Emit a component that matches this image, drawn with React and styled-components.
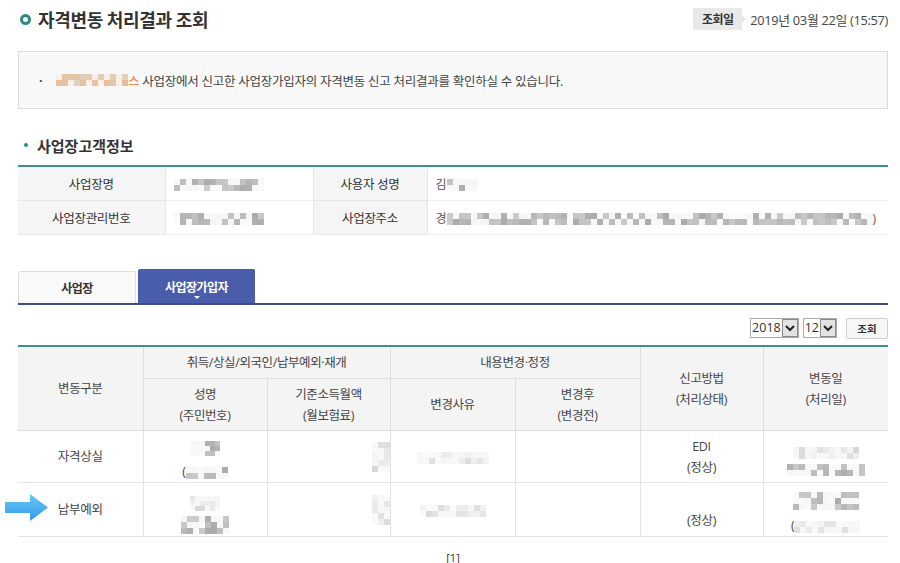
import React from "react";
import styled, { createGlobalStyle } from "styled-components";

const GlobalStyle = createGlobalStyle`
    body {
        margin: 0;
        background: #fff;
        font-family: "Open Sans", "Noto Sans CJK KR", sans-serif;
        color: #444;
    }
`;

const rand = (seed, i) => {
    const x = Math.sin(seed * 97.13 + i * 12.9898) * 43758.5453;
    return x - Math.floor(x);
};

const Mosaic = ({ w, h, cell = 6, seed = 1, warm, light }) => {
    const cols = Math.ceil(w / cell);
    const rows = Math.ceil(h / cell);
    const cells = [];
    for (let i = 0; i < cols * rows; i++) {
        const r = rand(seed, i);
        let bg;
        if (warm) {
            bg = r > 0.7 ? "#f7efe8" : `rgb(${235 - r * 20}, ${185 + r * 40}, ${150 + r * 60})`;
        } else {
            const base = light ? 215 : 170;
            const v = r > 0.55 ? 240 + Math.round(r * 10) : base + Math.round(r * 60);
            bg = `rgb(${v}, ${v}, ${v})`;
        }
        cells.push(<MosaicCell key={i} style={{ background: bg }} />);
    }
    return (
        <MosaicGrid $cols={cols} $cell={cell}>
            {cells}
        </MosaicGrid>
    );
};

const MosaicGrid = styled.span`
    display: inline-grid;
    grid-template-columns: repeat(${(p) => p.$cols}, ${(p) => p.$cell}px);
    grid-auto-rows: ${(p) => p.$cell}px;
    vertical-align: middle;
`;

const MosaicCell = styled.span`
    display: block;
`;

const Chevron = () => (
    <svg width="10" height="8" viewBox="0 0 10 8">
        <path d="M1 2 L5 6 L9 2" fill="none" stroke="#222" strokeWidth="2" />
    </svg>
);

const App = () => {
    return (
        <>
            <GlobalStyle />
            <Page>
                <Header>
                    <Title>
                        <Ring />
                        자격변동 처리결과 조회
                    </Title>
                    <DateWrap>
                        <Badge>조회일</Badge>
                        <DateText>2019년 03월 22일 (15:57)</DateText>
                    </DateWrap>
                </Header>

                <InfoBox>
                    <Bullet>·</Bullet>
                    <Mosaic w={72} h={12} cell={6} seed={3} warm />
                    <Orange>스</Orange>
                    &nbsp;사업장에서 신고한 사업장가입자의 자격변동 신고 처리결과를 확인하실 수 있습니다.
                </InfoBox>

                <SectionTitle>
                    <Dot />
                    사업장고객정보
                </SectionTitle>

                <InfoTable>
                    <colgroup>
                        <col style={{ width: 147 }} />
                        <col style={{ width: 148 }} />
                        <col style={{ width: 114 }} />
                        <col style={{ width: 461 }} />
                    </colgroup>
                    <tbody>
                        <tr>
                            <InfoTh>사업장명</InfoTh>
                            <InfoTd>
                                <Mosaic w={88} h={12} cell={6} seed={7} />
                            </InfoTd>
                            <InfoTh>사용자 성명</InfoTh>
                            <InfoTd>
                                김<Mosaic w={30} h={12} cell={6} seed={9} />
                            </InfoTd>
                        </tr>
                        <tr>
                            <InfoTh>사업장관리번호</InfoTh>
                            <InfoTd>
                                <Mosaic w={90} h={12} cell={6} seed={11} />
                            </InfoTd>
                            <InfoTh>사업장주소</InfoTh>
                            <InfoTd>
                                경<Mosaic w={426} h={12} cell={6} seed={13} />)
                            </InfoTd>
                        </tr>
                    </tbody>
                </InfoTable>

                <TabBar>
                    <Tab>사업장</Tab>
                    <Tab $active>사업장가입자</Tab>
                </TabBar>

                <Controls>
                    <SelectBox>
                        <SelectText>2018</SelectText>
                        <SelectArrow>
                            <Chevron />
                        </SelectArrow>
                    </SelectBox>
                    <SelectBox>
                        <SelectText>12</SelectText>
                        <SelectArrow>
                            <Chevron />
                        </SelectArrow>
                    </SelectBox>
                    <SearchButton>조회</SearchButton>
                </Controls>

                <MainTable>
                    <colgroup>
                        <col style={{ width: 125 }} />
                        <col style={{ width: 124 }} />
                        <col style={{ width: 123 }} />
                        <col style={{ width: 125 }} />
                        <col style={{ width: 125 }} />
                        <col style={{ width: 123 }} />
                        <col style={{ width: 125 }} />
                    </colgroup>
                    <thead>
                        <tr>
                            <HeadTh rowSpan={2}>변동구분</HeadTh>
                            <HeadTh colSpan={2} $h={31}>
                                취득/상실/외국인/납부예외·재개
                            </HeadTh>
                            <HeadTh colSpan={2} $h={31}>
                                내용변경·정정
                            </HeadTh>
                            <HeadTh rowSpan={2}>
                                신고방법
                                <br />
                                (처리상태)
                            </HeadTh>
                            <HeadTh rowSpan={2}>
                                변동일
                                <br />
                                (처리일)
                            </HeadTh>
                        </tr>
                        <tr>
                            <HeadTh $h={51}>
                                성명
                                <br />
                                (주민번호)
                            </HeadTh>
                            <HeadTh $h={51}>
                                기준소득월액
                                <br />
                                (월보험료)
                            </HeadTh>
                            <HeadTh $h={51}>변경사유</HeadTh>
                            <HeadTh $h={51}>
                                변경후
                                <br />
                                (변경전)
                            </HeadTh>
                        </tr>
                    </thead>
                    <tbody>
                        <tr>
                            <DataTd>자격상실</DataTd>
                            <DataTd>
                                <Stack>
                                    <Mosaic w={30} h={15} cell={5} seed={21} />
                                    <span>
                                        (<Mosaic w={42} h={12} cell={6} seed={22} />
                                    </span>
                                </Stack>
                            </DataTd>
                            <DataTd $right>
                                <Mosaic w={18} h={30} cell={6} seed={23} light />
                            </DataTd>
                            <DataTd>
                                <Mosaic w={72} h={10} cell={6} seed={24} light />
                            </DataTd>
                            <DataTd />
                            <DataTd>
                                EDI
                                <br />
                                (정상)
                            </DataTd>
                            <DataTd>
                                <Stack>
                                    <Mosaic w={66} h={8} cell={6} seed={25} light />
                                    <Mosaic w={78} h={12} cell={6} seed={26} />
                                </Stack>
                            </DataTd>
                        </tr>
                        <tr>
                            <DataTd>
                                <Arrow width="43" height="27" viewBox="0 0 43 27">
                                    <defs>
                                        <linearGradient id="ag" x1="0" y1="0" x2="0" y2="1">
                                            <stop offset="0" stopColor="#6cc8f6" />
                                            <stop offset="1" stopColor="#2f9be6" />
                                        </linearGradient>
                                    </defs>
                                    <polygon
                                        points="0,8 25,8 25,0 43,13.5 25,27 25,19 0,19"
                                        fill="url(#ag)"
                                    />
                                </Arrow>
                                납부예외
                            </DataTd>
                            <DataTd>
                                <Stack>
                                    <Mosaic w={30} h={15} cell={5} seed={31} light />
                                    <Mosaic w={48} h={15} cell={6} seed={32} />
                                </Stack>
                            </DataTd>
                            <DataTd $right>
                                <Mosaic w={18} h={30} cell={6} seed={33} light />
                            </DataTd>
                            <DataTd>
                                <Mosaic w={66} h={10} cell={6} seed={34} light />
                            </DataTd>
                            <DataTd />
                            <DataTd>
                                &nbsp;
                                <br />
                                (정상)
                            </DataTd>
                            <DataTd>
                                <Stack>
                                    <Mosaic w={66} h={18} cell={6} seed={35} />
                                    <span>
                                        (<Mosaic w={66} h={10} cell={6} seed={36} light />
                                    </span>
                                </Stack>
                            </DataTd>
                        </tr>
                    </tbody>
                </MainTable>

                <Pager>[1]</Pager>
            </Page>
        </>
    );
};

const Page = styled.div`
    width: 870px;
    padding: 8px 0 0 18px;
    overflow: hidden;
    height: 555px;
`;

const Header = styled.div`
    display: flex;
    justify-content: space-between;
    align-items: center;
    height: 22px;
`;

const Title = styled.h1`
    margin: 0;
    padding-left: 2px;
    display: flex;
    align-items: center;
    gap: 7px;
    font-size: 18px;
    font-weight: 700;
    color: #333;
    letter-spacing: -0.3px;
    line-height: 22px;
    font-family: "Noto Sans CJK KR", sans-serif;
`;

const Ring = styled.span`
    width: 11px;
    height: 11px;
    box-sizing: border-box;
    border: 3px solid #2c8a85;
    border-radius: 50%;
`;

const DateWrap = styled.div`
    display: flex;
    align-items: center;
`;

const Badge = styled.span`
    position: relative;
    display: flex;
    align-items: center;
    justify-content: center;
    width: 49px;
    height: 22px;
    background: #e9e9e9;
    font-size: 12px;
    font-weight: 700;
    color: #333;
    letter-spacing: -0.5px;
    &::after {
        content: "";
        position: absolute;
        right: -4px;
        top: 7px;
        border-left: 4px solid #e9e9e9;
        border-top: 4px solid transparent;
        border-bottom: 4px solid transparent;
    }
`;

const DateText = styled.span`
    margin-left: 8px;
    font-size: 12.8px;
    color: #444;
    letter-spacing: -0.3px;
`;

const InfoBox = styled.div`
    margin-top: 21px;
    height: 58px;
    box-sizing: border-box;
    border: 1px solid #dcdcdc;
    background: #f8f8f8;
    display: flex;
    align-items: center;
    padding-left: 20px;
    font-size: 12.5px;
    color: #444;
    letter-spacing: -0.25px;
    white-space: nowrap;
`;

const Bullet = styled.span`
    width: 17px;
    font-weight: 700;
`;

const Orange = styled.span`
    color: #e57a1e;
`;

const SectionTitle = styled.h2`
    margin: 26px 0 0;
    height: 20px;
    display: flex;
    align-items: center;
    gap: 9px;
    padding-left: 6px;
    font-size: 15px;
    font-weight: 700;
    color: #333;
    font-family: "Noto Sans CJK KR", sans-serif;
`;

const Dot = styled.span`
    width: 4px;
    height: 4px;
    border-radius: 50%;
    background: #2c8a85;
`;

const InfoTable = styled.table`
    margin-top: 10px;
    width: 870px;
    table-layout: fixed;
    border-collapse: collapse;
    border-top: 2px solid #3f8f8b;
    border-bottom: 1px solid #c9c9c9;
`;

const InfoTh = styled.th`
    height: 33px;
    padding: 0;
    background: #f5f5f5;
    font-size: 12.5px;
    font-weight: 400;
    color: #333;
    letter-spacing: -0.3px;
    border: 1px solid #e7e7e7;
    border-top: none;
    &:first-child {
        border-left: none;
    }
`;

const InfoTd = styled.td`
    padding: 0 0 0 8px;
    font-size: 12px;
    color: #555;
    white-space: nowrap;
    border-bottom: 1px solid #efefef;
    border-right: 1px solid #e7e7e7;
    &:last-child {
        border-right: none;
    }
`;

const TabBar = styled.div`
    margin-top: 34px;
    height: 34px;
    display: flex;
    align-items: flex-end;
    gap: 2px;
    border-bottom: 2px solid #3d4c86;
`;

const Tab = styled.div`
    position: relative;
    box-sizing: border-box;
    width: ${(p) => (p.$active ? 117 : 118)}px;
    height: ${(p) => (p.$active ? 34 : 32)}px;
    display: flex;
    align-items: center;
    justify-content: center;
    background: ${(p) => (p.$active ? "#4a5dab" : "#f9f9f9")};
    border: 1px solid ${(p) => (p.$active ? "#4a5dab" : "#dedede")};
    border-bottom: none;
    border-radius: 2px 2px 0 0;
    color: ${(p) => (p.$active ? "#fff" : "#333")};
    font-size: 12px;
    font-weight: 700;
    letter-spacing: -0.5px;
    &::after {
        content: "";
        display: ${(p) => (p.$active ? "block" : "none")};
        position: absolute;
        left: 50%;
        bottom: 4px;
        margin-left: -3px;
        border-top: 3px solid #fff;
        border-left: 3px solid transparent;
        border-right: 3px solid transparent;
    }
`;

const Controls = styled.div`
    margin-top: 13px;
    height: 20px;
    display: flex;
    justify-content: flex-end;
    align-items: center;
    gap: 4px;
`;

const SelectBox = styled.div`
    display: flex;
    height: 20px;
    box-sizing: border-box;
    border: 1px solid #a9a9a9;
    background: #fff;
`;

const SelectText = styled.span`
    padding: 0 1px;
    font-size: 12.5px;
    line-height: 18px;
    color: #333;
`;

const SelectArrow = styled.span`
    width: 14px;
    display: flex;
    align-items: center;
    justify-content: center;
    background: #e3e3e3;
    border: 1px solid #8a8a8a;
`;

const SearchButton = styled.button`
    margin-left: 5px;
    width: 42px;
    height: 21px;
    padding: 0;
    border: 1px solid #cfcfcf;
    border-radius: 2px;
    background: #f7f7f7;
    font-family: "Noto Sans CJK KR", sans-serif;
    font-size: 10.5px;
    font-weight: 700;
    color: #333;
`;

const MainTable = styled.table`
    margin-top: 7px;
    width: 870px;
    table-layout: fixed;
    border-collapse: collapse;
    border-top: 2px solid #3f8f8b;
    border-bottom: 1px solid #c9c9c9;
`;

const HeadTh = styled.th`
    height: ${(p) => (p.$h ? p.$h : 83)}px;
    padding: 0;
    background: #f4f4f4;
    font-size: 12.5px;
    line-height: 21px;
    font-weight: 400;
    color: #444;
    letter-spacing: -0.4px;
    border: 1px solid #dedede;
    border-top: none;
    tr:first-child > &:first-child {
        border-left: none;
    }
    tr:first-child > &:last-child {
        border-right: none;
    }
`;

const DataTd = styled.td`
    position: relative;
    height: 51px;
    padding: 0;
    text-align: ${(p) => (p.$right ? "right" : "center")};
    font-size: 12.5px;
    line-height: 21px;
    color: #444;
    letter-spacing: -0.3px;
    border: 1px solid #e3e3e3;
    border-top: none;
    white-space: nowrap;
    &:first-child {
        border-left: none;
    }
    &:last-child {
        border-right: none;
    }
`;

const Stack = styled.span`
    display: inline-flex;
    flex-direction: column;
    align-items: center;
    gap: 5px;
`;

const Arrow = styled.svg`
    position: absolute;
    left: -13px;
    top: 11px;
`;

const Pager = styled.div`
    margin-top: 13px;
    text-align: center;
    font-size: 11px;
    color: #333;
`;

export default App;
